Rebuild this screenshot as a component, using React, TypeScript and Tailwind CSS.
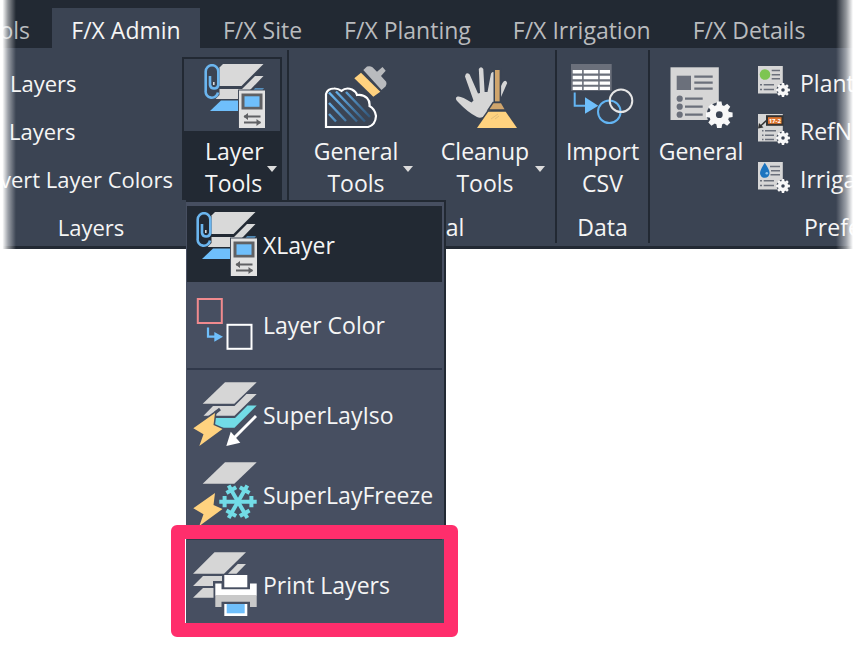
import type { ReactNode } from "react";

const Icon = ({ children }: { children: ReactNode }) => (
  <svg viewBox="0 0 64 64" className="size-16 shrink-0" aria-hidden="true">
    {children}
  </svg>
);

const Bolt = () => (
  <path
    d="M22 31 L20.5 43 L29.5 47 L6.3 64 L10.5 52.3 L0.3 46.3 Z"
    fill="#ffd27f"
    stroke="#474f61"
    strokeWidth="3"
    paintOrder="stroke"
  />
);

const Gear = ({ x, y, scale }: { x: number; y: number; scale: number }) => (
  <g transform={`translate(${x} ${y}) scale(${scale})`}>
    <circle r="12.5" fill="#3b4453" />
    <circle r="10" fill="#f8f8f8" />
    {[0, 45, 90, 135, 180, 225, 270, 315].map((angle) => (
      <path
        key={angle}
        d="M-3 -9 L-2.2 -13.3 H2.2 L3 -9 Z"
        fill="#f8f8f8"
        transform={`rotate(${angle})`}
      />
    ))}
    <circle r="3.4" fill="#3b4453" />
  </g>
);

const XLayerIcon = () => (
  <Icon>
    <path d="M22 0 H62.5 L40.5 22 H18.5 V3.5 Z" fill="#d9d9d9" />
    <path d="M18.5 25 H41 L54 12 H62.5 L50 25 L38 35 H14.5 L18.5 31 Z" fill="#d9d9d9" />
    <path d="M54 24.3 H63 L61 26.5 H52 Z" fill="#5fa9e0" />
    <path d="M20 36.5 H38 V47 H9 Z" fill="#6fbffb" />
    <path
      d="M17 28.5 A6.2 6.2 0 0 1 4.7 26.5 V7.5 A6.2 6.2 0 0 1 17.3 7.5 V21 A4.2 4.2 0 0 1 9 21 V12"
      fill="none"
      stroke="#6bb5ee"
      strokeWidth="2.6"
    />
    <path d="M12.8 18 V21" stroke="#d9d9d9" strokeWidth="1.6" />
    <rect x="38" y="26.5" width="26" height="38" fill="#e2e2e2" stroke="#434b59" strokeWidth="2" paintOrder="stroke" />
    <rect x="40.5" y="29.5" width="21" height="16" fill="#606164" />
    <rect x="43.5" y="32.3" width="15" height="10.5" fill="#6fbffb" />
    <path d="M43 52.5 H59.5 M43 58.5 H59.5" stroke="#606164" strokeWidth="2" />
    <path d="M42.5 52.5 L47 49 V56 Z M60 58.5 L55.5 55 V62 Z" fill="#606164" />
  </Icon>
);

const LayerColorIcon = () => (
  <Icon>
    <rect x="4.8" y="7" width="24" height="24" fill="none" stroke="#f08a8e" strokeWidth="2" />
    <rect x="34.5" y="32.8" width="24" height="24" fill="none" stroke="#fff" strokeWidth="2" />
    <path d="M15 35.5 V44.7 H22" fill="none" stroke="#6fbffb" strokeWidth="2.2" />
    <path d="M21.3 40 L30 44.7 L21.3 49.7 Z" fill="#6fbffb" />
  </Icon>
);

const SuperLayIsoIcon = () => (
  <Icon>
    <path d="M32 0.3 H63.7 L41.3 21.7 H9.7 Z" fill="#d6d6d6" />
    <path d="M53.5 12 H63.7 L41.5 33.8 H10.5 L20 24 H41.5 Z" fill="#d6d6d6" />
    <path d="M54.5 23.5 H63.7 L41.5 45.7 H28 L18 41 L20 36 H42 Z" fill="#72dce6" />
    <path d="M22 31 L27 27" stroke="#474f61" strokeWidth="3" />
    <Bolt />
    <path d="M63 34 L41 56" stroke="#fff" strokeWidth="3" />
    <path d="M33.3 64 L37.8 49.8 L47.3 60.8 Z" fill="#fff" />
  </Icon>
);

const SuperLayFreezeIcon = () => (
  <Icon>
    <path d="M32 0.3 H63.7 L41.3 21.7 H9.7 Z" fill="#d6d6d6" />
    <Bolt />
    <g transform="translate(45 39.7)" stroke="#72dce6" strokeWidth="4" fill="none">
      {[0, 60, 120, 180, 240, 300].map((angle) => (
        <path key={angle} d="M0 0 H18.7 M13.4 -5.6 V5.6" transform={`rotate(${angle})`} />
      ))}
    </g>
  </Icon>
);

const PrintLayersIcon = () => (
  <Icon>
    <path d="M21.5 0.3 H53 L31 21.7 H0 Z" fill="#d6d6d6" />
    <path d="M44.7 12 H53 L43.5 21.7 H35 Z" fill="#d6d6d6" />
    <path d="M10 24 H29 V29 H20 V34 H0 Z" fill="#d6d6d6" />
    <path d="M10 36 H20.5 V45.7 H0 Z" fill="#d6d6d6" />
    <path d="M22.3 31.5 H28.5 V37.3 H57 V31.5 H63.7 V43.5 H22.3 Z" fill="#fff" />
    <path d="M22.3 43 H63.7 V55 H57 V49.8 H28.5 V55 H22.3 Z" fill="#c9c9c9" />
    <rect x="31.3" y="23" width="23" height="12.3" fill="#fff" />
    <rect x="31.3" y="52" width="23" height="12" fill="#fff" />
    <rect x="33.7" y="52" width="18" height="9.3" fill="#6fbffb" />
  </Icon>
);

const GeneralToolsIcon = () => (
  <Icon>
    <defs>
      <linearGradient id="hatch" gradientUnits="userSpaceOnUse" x1="8" y1="30" x2="46" y2="60">
        <stop offset="0" stopColor="#68b5f0" />
        <stop offset="1" stopColor="#2c4c6c" />
      </linearGradient>
    </defs>
    <path
      d="M5 50 L12 57.5 M5 39 L22 57 M5 28.5 L33 57.5 M12 27.5 L41 57.5 M22 28 L46 53"
      fill="none"
      stroke="url(#hatch)"
      strokeWidth="2.4"
    />
    <path
      d="M2 63 V30 Q3.5 24.5 10 24.5 Q14 24.3 17.5 26.8 Q22 23 28 25.5 Q32 27.5 33 31 Q39 30 43 34 Q46 37 45.5 42 Q51 45 52 52 Q51.5 61 44 63 Z"
      fill="none"
      stroke="#fff"
      strokeWidth="2.2"
    />
    <path d="M37 8.7 L56.3 27.7 L49.3 32.7 L30.3 14.3 Z" fill="#ffd27f" />
    <path
      d="M39.3 6 L43 2.6 Q46 1.6 48.5 3.2 L53 7.7 L58.5 3 L61.7 6.7 L57 12 L62.2 17.7 Q63.2 20 61.5 22.5 L57.5 26 Z"
      fill="#b9bbbe"
    />
  </Icon>
);

const CleanupToolsIcon = () => (
  <Icon>
    <path
      d="M25.8 5 Q28 1.5 30.3 5 L31.6 28 L34.5 28 L38 9.5 Q40.5 6.5 42.3 10 L42 34 L49.5 19 Q52.5 14.5 54.2 19 L48 33 L42 43 L36 48 Q30 55.5 24 53 Q15 48.5 6 39 Q0.5 34 4.5 32.5 Q8 31.5 18.5 38.5 L20.5 36.5 L12 12.5 Q13 7 16.7 10.5 L25 29.5 L27 29 Z"
      fill="#d6d6d6"
    />
    <g stroke="#3b4453" strokeWidth="3" paintOrder="stroke">
      <rect x="42" y="6" width="4.6" height="31.5" fill="#d0a56c" />
      <path d="M40.5 39.3 H48 L51.5 45.3 H36.5 Z" fill="#d0a56c" />
      <path d="M35.3 47.7 H52.7 L64 64 H24 Z" fill="#ffd27f" />
    </g>
    <path d="M38 55 L45 50 M42 55 L46 52" stroke="#e3bd78" strokeWidth="1" />
  </Icon>
);

const ImportIcon = () => (
  <Icon>
    <rect x="0" y="0" width="40.7" height="26.7" fill="#6b707b" />
    {[6, 11.8, 17.4, 22.7].map((y) => (
      <path
        key={y}
        d={`M1.7 ${y} h9.4 v3.4 h-9.4 z M12.7 ${y} h14.5 v3.4 h-14.5 z M28.7 ${y} h10.3 v3.4 h-10.3 z`}
        fill="#fff"
      />
    ))}
    <path d="M3.7 28.5 V41.7 H15" fill="none" stroke="#63b5f3" strokeWidth="2" />
    <path d="M14 33.3 L27.3 41.7 L14 49.7 Z" fill="#6fbffb" />
    <circle cx="38.3" cy="47.7" r="11.3" fill="none" stroke="#63b5f3" strokeWidth="2" />
    <circle cx="50" cy="36.7" r="11.3" fill="none" stroke="#e6e6e6" strokeWidth="2" />
  </Icon>
);

const PreferencesIcon = () => (
  <Icon>
    <rect x="1.5" y="3.3" width="48.3" height="52.7" fill="#d6d6d6" />
    <rect x="7.7" y="11.7" width="14.3" height="14.3" fill="#6b707b" />
    <path
      d="M25.3 12.7 H43.7 M25.3 18.7 H43.7 M25.3 24.7 H43.7 M16 34.7 H33.7 M16 42.7 H33.7 M16 50.7 H33.7"
      stroke="#6b707b"
      strokeWidth="2.2"
    />
    <circle cx="10.7" cy="34.7" r="3.1" fill="#6b707b" />
    <circle cx="10.7" cy="42.7" r="3.1" fill="#6b707b" />
    <circle cx="10.7" cy="50.7" r="3.1" fill="#6b707b" />
    <Gear x={50.3} y={50.7} scale={1} />
  </Icon>
);

const SheetIcon = ({ children }: { children: ReactNode }) => (
  <svg viewBox="0 2 32 32" className="size-8 shrink-0 overflow-visible" aria-hidden="true">
    <rect width="24.8" height="27.5" fill="#d6d6d6" />
    {children}
    <Gear x={25} y={24} scale={0.52} />
  </svg>
);

const PlantIcon = () => (
  <SheetIcon>
    <circle cx="7" cy="8.5" r="5.3" fill="#7dc552" />
    <path
      d="M13.7 4.5 H22 M13.7 8.7 H22 M13.7 12.8 H22 M2 18.8 H4 M5.7 18.8 H16 M2 23.5 H4 M5.7 23.5 H16"
      stroke="#6b707b"
      strokeWidth="1.5"
    />
  </SheetIcon>
);

const RefNoteIcon = () => (
  <SheetIcon>
    <path d="M9 6 L2 12.5" stroke="#333" strokeWidth="1.5" />
    <path d="M0 14.5 L1 9 L5.5 13.5 Z" fill="#333" />
    <rect x="8" y="1.2" width="17.5" height="10.6" fill="#333" />
    <rect x="10" y="3.2" width="13.5" height="6.6" fill="#e0762f" />
    <text x="16.8" y="8.8" textAnchor="middle" fontSize="6" fontWeight="700" fill="#fff">
      17-2
    </text>
    <path
      d="M4 16.8 H5.5 M7 16.8 H18 M4 21.3 H5.5 M7 21.3 H16 M4 25.5 H5.5 M7 25.5 H16"
      stroke="#6b707b"
      strokeWidth="1.5"
    />
  </SheetIcon>
);

const IrrigationIcon = () => (
  <SheetIcon>
    <path d="M6.8 0.8 Q11.6 8 11.6 11 A4.8 4.8 0 0 1 2 11 Q2 8 6.8 0.8 Z" fill="#1b74bf" />
    <circle cx="8.8" cy="11.2" r="1.3" fill="#8cc4ee" />
    <path
      d="M12 4.5 H22 M13 8.7 H22 M12.5 12.8 H22 M2 18.8 H4 M5.7 18.8 H16 M2 23.5 H4 M5.7 23.5 H16"
      stroke="#6b707b"
      strokeWidth="1.5"
    />
  </SheetIcon>
);

const Caret = () => (
  <svg viewBox="0 0 10 6" className="mb-[27px] h-[6px] w-[10px] shrink-0" aria-hidden="true">
    <path d="M0 0 H10 L5 6 Z" fill="#dcdcdc" />
  </svg>
);

const Panel = ({ title, className, children }: { title: string; className: string; children: ReactNode }) => (
  <section className={`flex shrink-0 flex-col border-[#222933] ${className}`}>
    <div className="flex h-[150px] pt-[14px]">{children}</div>
    <h2 className="mt-[11px] text-center leading-8">{title}</h2>
  </section>
);

const ToolButton = ({
  icon,
  lines,
  width,
  caret,
}: {
  icon: ReactNode;
  lines: string[];
  width: string;
  caret?: boolean;
}) => (
  <button type="button" className="flex items-end gap-[6px] self-start whitespace-nowrap leading-8">
    <span className={`flex flex-col items-center ${width}`}>
      <span className="mb-[7px]">{icon}</span>
      {lines.map((line) => (
        <span key={line}>{line}</span>
      ))}
    </span>
    {caret && <Caret />}
  </button>
);

const MenuItem = ({ icon, label, active }: { icon: ReactNode; label: string; active?: boolean }) => (
  <button
    type="button"
    role="menuitem"
    className={`flex h-[76px] w-full items-center gap-[6px] whitespace-nowrap pl-[6px] text-left ${
      active ? "bg-[#222933]" : ""
    }`}
  >
    {icon}
    <span className="pt-0.5">{label}</span>
  </button>
);

const Separator = () => <hr className="my-[2px] border-t-2 border-[#30384a]" />;

const LayerMenu = () => (
  <div
    role="menu"
    className="absolute left-1 top-full z-10 flex w-[260px] flex-col gap-1 border-r-2 border-t-2 border-[#222933] bg-[#474f61] pb-[2px] pl-px pr-[2px] pt-1"
  >
    <MenuItem icon={<XLayerIcon />} label="XLayer" active />
    <MenuItem icon={<LayerColorIcon />} label="Layer Color" />
    <Separator />
    <MenuItem icon={<SuperLayIsoIcon />} label="SuperLayIso" />
    <MenuItem icon={<SuperLayFreezeIcon />} label="SuperLayFreeze" />
    <Separator />
    <MenuItem icon={<PrintLayersIcon />} label="Print Layers" />
    <div className="pointer-events-none absolute -bottom-[13px] -left-[15px] -right-[14px] h-28 rounded-md border-[14px] border-[#ff2e6c]" />
  </div>
);

const tabs = ["F/X Site", "F/X Planting", "F/X Irrigation", "F/X Details"];

const preferences = [
  { label: "Plant", icon: <PlantIcon /> },
  { label: "RefNo", icon: <RefNoteIcon /> },
  { label: "Irriga", icon: <IrrigationIcon /> },
];

const App = () => {
  return (
    <main className="min-h-screen w-full overflow-hidden bg-white font-['Open_Sans',sans-serif] text-[23px] text-[#f5f5f5]">
      <div className="relative">
        <nav className="flex h-12 items-end overflow-hidden whitespace-nowrap bg-[#222933] leading-10 text-[#b9bbbe]">
          <button type="button" className="flex h-10 w-[52px] shrink-0 justify-end pr-[22px] pt-[2px]">
            ols
          </button>
          <button type="button" className="mr-[2px] h-10 w-[148px] shrink-0 bg-[#3b4453] pt-[2px] text-[#f5f5f5]">
            F/X Admin
          </button>
          {tabs.map((tab) => (
            <button key={tab} type="button" className="h-10 shrink-0 px-[21px] pt-[2px]">
              {tab}
            </button>
          ))}
        </nav>

        <div className="flex border-b-[3px] border-[#222933] bg-[#3b4453] pb-[3px] pt-[2px]">
          <section className="flex w-[289px] shrink-0 border-r-2 border-[#222933]">
            <div className="flex w-[182px] flex-col overflow-hidden whitespace-nowrap pt-[9px] text-[22px]">
              <button type="button" className="h-12 pl-[10px] text-left">
                Layers
              </button>
              <button type="button" className="h-12 pl-[9px] text-left">
                Layers
              </button>
              <button type="button" className="flex h-12 items-center justify-end pr-[9px]">
                vert Layer Colors
              </button>
              <h2 className="mt-2 text-center leading-8">Layers</h2>
            </div>
            <div className="relative mt-[7px] h-[143px] w-[100px]">
              <button
                type="button"
                aria-haspopup="menu"
                aria-expanded="true"
                className="flex h-full w-full flex-col border-2 border-b-0 border-[#222933] bg-[#222933] leading-8"
              >
                <span className="flex w-full justify-center bg-[#3b4453] pb-[3px] pl-[2px] pt-[5px]">
                  <XLayerIcon />
                </span>
                <span className="flex w-full items-end justify-end gap-[6px] pr-[3px] pt-1">
                  <span className="w-[56px]">
                    Layer
                    <br />
                    Tools
                  </span>
                  <Caret />
                </span>
              </button>
              <LayerMenu />
            </div>
          </section>

          <Panel title="General" className="w-[268px] border-r-2">
            <div className="flex gap-7 pl-[26px]">
              <ToolButton icon={<GeneralToolsIcon />} lines={["General", "Tools"]} width="w-[82px]" caret />
              <ToolButton icon={<CleanupToolsIcon />} lines={["Cleanup", "Tools"]} width="w-[88px]" caret />
            </div>
          </Panel>

          <Panel title="Data" className="w-[93px] border-r-2">
            <div className="flex w-full justify-center">
              <ToolButton icon={<ImportIcon />} lines={["Import", "CSV"]} width="w-[72px]" />
            </div>
          </Panel>

          <section className="min-w-0 flex-1 overflow-hidden whitespace-nowrap">
            <div className="flex h-[154px]">
              <div className="pl-[10px] pt-[14px]">
                <ToolButton icon={<PreferencesIcon />} lines={["General"]} width="w-[82px]" />
              </div>
              <div className="flex flex-col pl-4 pt-[10px]">
                {preferences.map(({ label, icon }) => (
                  <button key={label} type="button" className="flex h-12 shrink-0 items-center gap-[10px]">
                    {icon}
                    <span className="pb-0.5">{label}</span>
                  </button>
                ))}
              </div>
            </div>
            <h2 className="mt-[7px] pl-[154px] leading-8">Prefe</h2>
          </section>
        </div>

        <div className="pointer-events-none absolute inset-y-0 left-0 w-4 bg-linear-to-r from-white from-15% via-white/50 to-transparent" />
        <div className="pointer-events-none absolute inset-y-0 right-0 w-5 bg-linear-to-l from-white from-15% via-white/50 to-transparent" />
      </div>
    </main>
  );
};

export default App;
